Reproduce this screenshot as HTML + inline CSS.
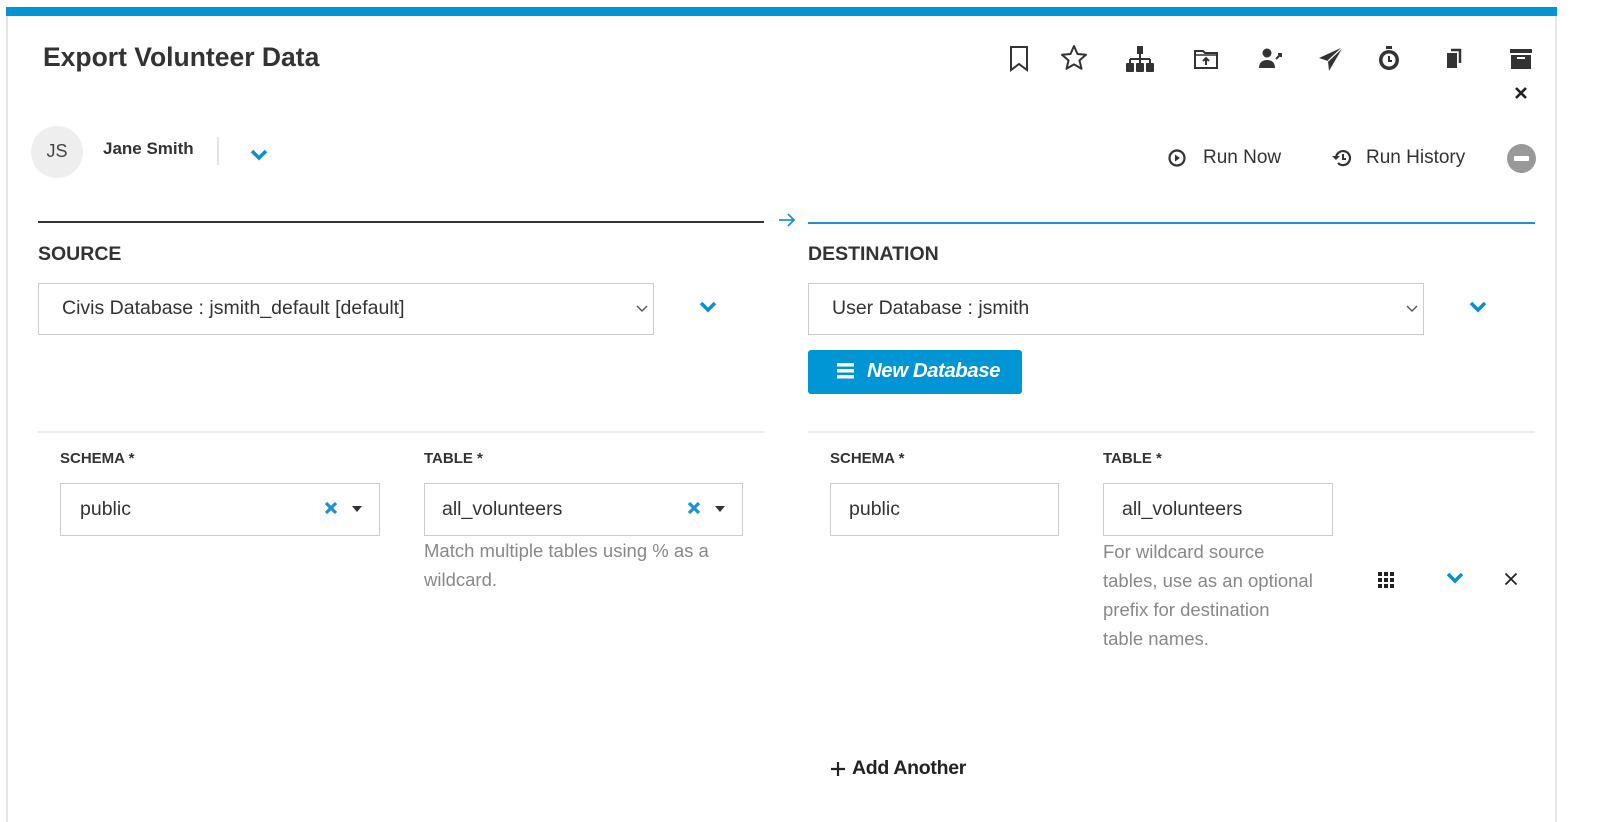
<!DOCTYPE html>
<html><head><meta charset="utf-8"><style>
*{margin:0;padding:0;box-sizing:border-box}
body{width:1600px;height:822px;background:#fff;font-family:"Liberation Sans",sans-serif;color:#333;position:relative;overflow:hidden}
.a{position:absolute}
.t{white-space:nowrap}
.box{position:absolute;border:1px solid #ccc;background:#fff}
.lbl{position:absolute;font-size:15px;font-weight:bold;color:#333}
.help{position:absolute;font-size:18.5px;color:#888;line-height:29px;white-space:nowrap}
.ic{position:absolute}
</style></head><body>
<div class="a" style="left:6px;top:7px;width:1551px;height:9px;background:#0095d5"></div>
<div class="a" style="left:6px;top:16px;width:2px;height:806px;background:#e6e6e6"></div>
<div class="a" style="left:1555px;top:16px;width:2px;height:806px;background:#e6e6e6"></div>

<div class="a t" style="left:43px;top:42px;font-size:26.5px;font-weight:bold;color:#333">Export Volunteer Data</div>

<!-- toolbar icons -->
<svg class="ic" style="left:1008px;top:45px" width="22" height="28" viewBox="0 0 22 28"><path d="M3 2h16v23l-8-6-8 6z" fill="none" stroke="#333" stroke-width="2"/></svg>
<svg class="ic" style="left:1060px;top:44px" width="28" height="26" viewBox="0 0 28 26"><path d="M14 2l3.5 8 8.5.8-6.5 5.6 2 8.4L14 20.4 6.5 24.8l2-8.4L2 10.8l8.5-.8z" fill="none" stroke="#333" stroke-width="2" stroke-linejoin="round"/></svg>
<svg class="ic" style="left:1125px;top:45px" width="30" height="28" viewBox="0 0 30 28"><rect x="12" y="1" width="6" height="8" fill="#333"/><path d="M15 9v5M5 14h20M5 14v5M15 14v5M25 14v5" stroke="#333" stroke-width="2" fill="none"/><rect x="1" y="18" width="8" height="9" rx="1" fill="#333"/><rect x="11" y="18" width="8" height="9" rx="1" fill="#333"/><rect x="21" y="18" width="8" height="9" rx="1" fill="#333"/></svg>
<svg class="ic" style="left:1193px;top:47px" width="26" height="24" viewBox="0 0 26 24"><path d="M2 4h8l2 2h12v15H2z" fill="none" stroke="#333" stroke-width="2"/><path d="M2 8h22" stroke="#333" stroke-width="1.5"/><path d="M13 18v-7M10 14l3-3 3 3" stroke="#333" stroke-width="2" fill="none"/></svg>
<svg class="ic" style="left:1258px;top:48px" width="26" height="22" viewBox="0 0 26 22"><circle cx="9" cy="5" r="4.5" fill="#333"/><path d="M1 20c0-6 4-8 8-8s8 2 8 8z" fill="#333"/><path d="M18 11l5-5M20 6h3v3" stroke="#333" stroke-width="2" fill="none"/></svg>
<svg class="ic" style="left:1317px;top:45px" width="28" height="28" viewBox="0 0 28 28"><path d="M26 2L2 13l9 3 1 10 14-24z" fill="#333"/><path d="M11 16l15-14" stroke="#fff" stroke-width="1.2"/></svg>
<svg class="ic" style="left:1376px;top:45px" width="26" height="28" viewBox="0 0 26 28"><circle cx="13" cy="15" r="10" fill="#333"/><rect x="10" y="1" width="6" height="3" fill="#333"/><circle cx="13" cy="15" r="6.5" fill="#fff"/><path d="M13 11v5h3" stroke="#333" stroke-width="2" fill="none"/></svg>
<svg class="ic" style="left:1444px;top:47px" width="22" height="24" viewBox="0 0 22 24"><rect x="3" y="6" width="10" height="15" fill="#333"/><path d="M7 3h9v13" stroke="#333" stroke-width="2.5" fill="none"/></svg>
<svg class="ic" style="left:1509px;top:47px" width="24" height="24" viewBox="0 0 24 24"><rect x="1" y="2" width="22" height="4" fill="#333"/><rect x="2" y="8" width="20" height="14" fill="#333"/><rect x="8" y="10" width="8" height="2" fill="#fff"/></svg>
<svg class="ic" style="left:1514px;top:86px" width="14" height="14" viewBox="0 0 14 14"><path d="M2 2l10 10M12 2L2 12" stroke="#222" stroke-width="2.6"/></svg>

<!-- user row -->
<div class="a" style="left:31px;top:126px;width:52px;height:52px;border-radius:50%;background:#eee"></div>
<div class="a t" style="left:31px;top:141px;width:52px;text-align:center;font-size:18px;color:#444">JS</div>
<div class="a t" style="left:103px;top:139px;font-size:17px;font-weight:bold;color:#333">Jane Smith</div>
<div class="a" style="left:217px;top:137px;width:2px;height:28px;background:#e3e3e3"></div>
<svg class="ic" style="left:250px;top:149px" width="18" height="12" viewBox="0 0 18 12"><path d="M2 2l7 7 7-7" stroke="#0a8fd1" stroke-width="3.5" fill="none"/></svg>

<svg class="ic" style="left:1167px;top:148px" width="20" height="20" viewBox="0 0 20 20"><circle cx="10" cy="10" r="7.5" fill="none" stroke="#333" stroke-width="2.2"/><path d="M8 6.5v7l5-3.5z" fill="#333"/></svg>
<div class="a t" style="left:1203px;top:147px;font-size:19px;color:#333">Run Now</div>
<svg class="ic" style="left:1330px;top:148px" width="22" height="20" viewBox="0 0 22 20"><path d="M6 10a7 7 0 1 1 2 5" fill="none" stroke="#333" stroke-width="2.2"/><path d="M2 8l4 4 4-4" fill="#333"/><path d="M13 6v5h3" stroke="#333" stroke-width="2" fill="none"/></svg>
<div class="a t" style="left:1366px;top:147px;font-size:19px;color:#333">Run History</div>
<div class="a" style="left:1507px;top:144px;width:29px;height:29px;border-radius:50%;background:#999"></div>
<div class="a" style="left:1514px;top:156px;width:15px;height:5px;background:#fff;border-radius:1px"></div>

<!-- section lines -->
<div class="a" style="left:38px;top:221px;width:726px;height:2px;background:#333"></div>
<svg class="ic" style="left:778px;top:213px" width="18" height="14" viewBox="0 0 18 14"><path d="M1 7h15M10 1l6 6-6 6" stroke="#1a93d3" stroke-width="1.8" fill="none"/></svg>
<div class="a" style="left:808px;top:222px;width:727px;height:2px;background:#1a93d3"></div>

<div class="a t" style="left:38px;top:243px;font-size:19.5px;font-weight:bold;color:#333">SOURCE</div>
<div class="a t" style="left:808px;top:243px;font-size:19.5px;font-weight:bold;color:#333">DESTINATION</div>

<div class="box" style="left:38px;top:283px;width:616px;height:52px"></div>
<div class="a t" style="left:62px;top:297px;font-size:19.5px;color:#333">Civis Database : jsmith_default [default]</div>
<svg class="ic" style="left:635px;top:304px" width="14" height="10" viewBox="0 0 14 10"><path d="M2 2l5 5 5-5" stroke="#555" stroke-width="1.4" fill="none"/></svg>
<svg class="ic" style="left:699px;top:301px" width="18" height="12" viewBox="0 0 18 12"><path d="M2 2l7 7 7-7" stroke="#0a8fd1" stroke-width="3.5" fill="none"/></svg>

<div class="box" style="left:808px;top:283px;width:616px;height:52px"></div>
<div class="a t" style="left:832px;top:297px;font-size:19.5px;color:#333">User Database : jsmith</div>
<svg class="ic" style="left:1405px;top:304px" width="14" height="10" viewBox="0 0 14 10"><path d="M2 2l5 5 5-5" stroke="#555" stroke-width="1.4" fill="none"/></svg>
<svg class="ic" style="left:1469px;top:301px" width="18" height="12" viewBox="0 0 18 12"><path d="M2 2l7 7 7-7" stroke="#0a8fd1" stroke-width="3.5" fill="none"/></svg>

<div class="a" style="left:808px;top:350px;width:214px;height:44px;background:#0095d5;border-radius:3px"></div>
<svg class="ic" style="left:837px;top:363px" width="17" height="16" viewBox="0 0 17 16"><rect x="0" y="0" width="17" height="3.5" fill="#fff"/><rect x="0" y="6" width="17" height="3.5" fill="#fff"/><rect x="0" y="12" width="17" height="3.5" fill="#fff"/></svg>
<div class="a t" style="left:867px;top:359px;font-size:20.5px;font-weight:bold;font-style:italic;color:#fff;letter-spacing:-0.5px">New Database</div>

<div class="a" style="left:38px;top:431px;width:726px;height:2px;background:#ececec"></div>
<div class="a" style="left:808px;top:431px;width:727px;height:2px;background:#ececec"></div>

<!-- source schema/table -->
<div class="lbl t" style="left:60px;top:450px">SCHEMA *</div>
<div class="lbl t" style="left:424px;top:450px">TABLE *</div>
<div class="box" style="left:60px;top:483px;width:320px;height:53px"></div>
<div class="a t" style="left:80px;top:498px;font-size:19.5px;color:#333">public</div>
<svg class="ic" style="left:323px;top:500px" width="16" height="16" viewBox="0 0 16 16"><path d="M3 3l10 10M13 3L3 13" stroke="#1a93d3" stroke-width="3.2"/></svg>
<svg class="ic" style="left:351px;top:505px" width="12" height="8" viewBox="0 0 12 8"><path d="M1 1h10L6 7z" fill="#333"/></svg>
<div class="box" style="left:424px;top:483px;width:319px;height:53px"></div>
<div class="a t" style="left:442px;top:498px;font-size:19.5px;color:#333">all_volunteers</div>
<svg class="ic" style="left:686px;top:500px" width="16" height="16" viewBox="0 0 16 16"><path d="M3 3l10 10M13 3L3 13" stroke="#1a93d3" stroke-width="3.2"/></svg>
<svg class="ic" style="left:714px;top:505px" width="12" height="8" viewBox="0 0 12 8"><path d="M1 1h10L6 7z" fill="#333"/></svg>
<div class="help" style="left:424px;top:536px">Match multiple tables using % as a<br>wildcard.</div>

<!-- destination schema/table -->
<div class="lbl t" style="left:830px;top:450px">SCHEMA *</div>
<div class="lbl t" style="left:1103px;top:450px">TABLE *</div>
<div class="box" style="left:830px;top:483px;width:229px;height:53px"></div>
<div class="a t" style="left:849px;top:498px;font-size:19.5px;color:#333">public</div>
<div class="box" style="left:1103px;top:483px;width:230px;height:53px"></div>
<div class="a t" style="left:1122px;top:498px;font-size:19.5px;color:#333">all_volunteers</div>
<div class="help" style="left:1103px;top:537px">For wildcard source<br>tables, use as an optional<br>prefix for destination<br>table names.</div>

<svg class="ic" style="left:1378px;top:572px" width="16" height="16" viewBox="0 0 16 16"><g fill="#222"><rect x="0" y="0" width="4" height="4"/><rect x="6" y="0" width="4" height="4"/><rect x="12" y="0" width="4" height="4"/><rect x="0" y="6" width="4" height="4"/><rect x="6" y="6" width="4" height="4"/><rect x="12" y="6" width="4" height="4"/><rect x="0" y="12" width="4" height="4"/><rect x="6" y="12" width="4" height="4"/><rect x="12" y="12" width="4" height="4"/></g></svg>
<svg class="ic" style="left:1446px;top:572px" width="18" height="12" viewBox="0 0 18 12"><path d="M2 2l7 7 7-7" stroke="#0a8fd1" stroke-width="3.5" fill="none"/></svg>
<svg class="ic" style="left:1504px;top:572px" width="14" height="14" viewBox="0 0 14 14"><path d="M1.5 1.5l11 11M12.5 1.5l-11 11" stroke="#222" stroke-width="1.8"/></svg>

<svg class="ic" style="left:830px;top:761px" width="16" height="16" viewBox="0 0 16 16"><path d="M8 1v14M1 8h14" stroke="#222" stroke-width="2.2"/></svg>
<div class="a t" style="left:852px;top:757px;font-size:19.5px;font-weight:bold;color:#222;letter-spacing:-0.3px">Add Another</div>
</body></html>
